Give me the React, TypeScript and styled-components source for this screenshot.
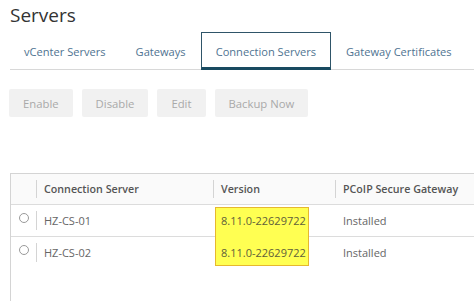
import { createGlobalStyle } from "styled-components";
import styled from "styled-components";

const GlobalStyle = createGlobalStyle`
  body {
    margin: 0;
    background: #fff;
    font-family: "Open Sans", "Liberation Sans", sans-serif;
    overflow: hidden;
  }
`;

const Page = styled.div`
  width: 474px;
  height: 301px;
  padding-left: 9px;
  box-sizing: border-box;
  overflow: hidden;
`;

const Title = styled.h1`
  margin: 0 0 0 1px;
  padding-top: 2px;
  height: 30px;
  font-size: 19px;
  line-height: 26px;
  font-weight: 400;
  color: #333;
`;

const TabBar = styled.div`
  display: flex;
  height: 37px;
  border-bottom: 1px solid #d8d8d8;
  margin-left: 1px;
`;

const Tab = styled.div<{ $active?: boolean }>`
  display: flex;
  flex-shrink: 0;
  align-items: center;
  padding: 2px 14px 0;
  white-space: nowrap;
  font-size: 11.1px;
  color: #4f7391;
  box-sizing: border-box;
  border: 1px solid ${(p) => (p.$active ? "#2f5569" : "transparent")};
  border-bottom: 3px solid ${(p) => (p.$active ? "#184a60" : "transparent")};
  margin-bottom: -1px;
  &:first-child {
    margin-left: -1px;
  }
`;

const Toolbar = styled.div`
  display: flex;
  gap: 9px;
  margin-top: 19px;
`;

const ActionButton = styled.button`
  height: 28px;
  padding: 0 14px;
  border: none;
  border-radius: 2px;
  background: #f1f1f1;
  color: #a9a9a9;
  font-family: inherit;
  font-size: 11.3px;
`;

const Table = styled.div`
  margin-top: 56px;
  margin-left: 1px;
  width: 470px;
  height: 140px;
  border: 1px solid #d4d4d4;
  border-right: none;
  position: relative;
`;

const Row = styled.div<{ $header?: boolean }>`
  display: grid;
  grid-template-columns: 25px 177px 122px 1fr;
  height: ${(p) => (p.$header ? "30px" : "31px")};
  background: ${(p) => (p.$header ? "#fafafa" : "#fff")};
  border-bottom: 1px solid #dcdcdc;
  color: ${(p) => (p.$header ? "#555" : "#666")};
  font-size: ${(p) => (p.$header ? "10.7px" : "11px")};
  font-weight: ${(p) => (p.$header ? 600 : 400)};
  &:last-child {
    border-bottom-color: transparent;
  }
`;

const Cell = styled.div<{ $divider?: boolean }>`
  display: flex;
  align-items: center;
  padding-left: 8px;
  position: relative;
  white-space: nowrap;
  &::before {
    content: "";
    display: ${(p) => (p.$divider ? "block" : "none")};
    position: absolute;
    left: 0;
    top: 6px;
    bottom: 6px;
    border-left: 1px solid #d4d4d4;
  }
`;

const SelectCell = styled.div`
  display: flex;
  align-items: center;
  justify-content: center;
  padding-left: 1px;
`;

const Radio = styled.span`
  width: 8px;
  height: 8px;
  border-radius: 50%;
  border: 1px solid #9a9a9a;
  margin-top: -6px;
`;

const Highlight = styled.div`
  position: absolute;
  left: 204px;
  top: 33px;
  width: 92px;
  height: 57px;
  background: #ffff52;
  border: 1px solid #e6b82e;
  pointer-events: none;
`;

const VersionText = styled.span`
  position: relative;
  z-index: 1;
  color: #5e5e3a;
`;

const servers = [
  { name: "HZ-CS-01", version: "8.11.0-22629722", gateway: "Installed" },
  { name: "HZ-CS-02", version: "8.11.0-22629722", gateway: "Installed" },
];

export default function App() {
  return (
    <Page>
      <GlobalStyle />
      <Title>Servers</Title>
      <TabBar>
        <Tab>vCenter Servers</Tab>
        <Tab>Gateways</Tab>
        <Tab $active>Connection Servers</Tab>
        <Tab>Gateway Certificates</Tab>
      </TabBar>
      <Toolbar>
        <ActionButton>Enable</ActionButton>
        <ActionButton>Disable</ActionButton>
        <ActionButton>Edit</ActionButton>
        <ActionButton>Backup Now</ActionButton>
      </Toolbar>
      <Table>
        <Highlight />
        <Row $header>
          <SelectCell />
          <Cell $divider>Connection Server</Cell>
          <Cell $divider>Version</Cell>
          <Cell $divider>PCoIP Secure Gateway</Cell>
        </Row>
        {servers.map((s) => (
          <Row key={s.name}>
            <SelectCell>
              <Radio />
            </SelectCell>
            <Cell $divider>{s.name}</Cell>
            <Cell>
              <VersionText>{s.version}</VersionText>
            </Cell>
            <Cell>{s.gateway}</Cell>
          </Row>
        ))}
      </Table>
    </Page>
  );
}
